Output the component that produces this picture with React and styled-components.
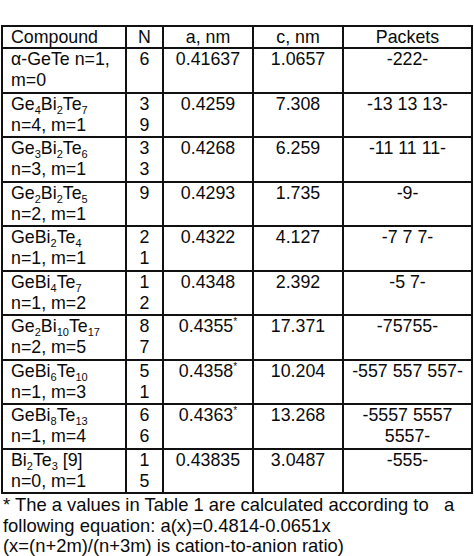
import styled, { createGlobalStyle } from 'styled-components'

const Global = createGlobalStyle`
  html, body {
    margin: 0;
    padding: 0;
    background: #fff;
  }
  body {
    font-family: "Liberation Sans", Arial, sans-serif;
    color: #0a0a0a;
  }
`

const Page = styled.div`
  width: 474px;
  height: 556px;
  overflow: hidden;
  padding-top: 25px;
  box-sizing: border-box;
`

const Table = styled.table`
  margin-left: 1px;
  width: 472px;
  border-collapse: collapse;
  table-layout: fixed;
  font-size: 17.8px;
`

const HeadCell = styled.th`
  border: 2px solid #111;
  height: 20px;
  padding: 0 ${({ $left }) => ($left ? '8px' : '2px')};
  line-height: 20px;
  font-weight: normal;
  text-align: ${({ $left }) => ($left ? 'left' : 'center')};
  white-space: nowrap;
`

const Cell = styled.td`
  border: 2px solid #111;
  height: 42.5px;
  padding: 0 ${({ $left }) => ($left ? '8px' : '4px')};
  line-height: 21.25px;
  vertical-align: top;
  text-align: ${({ $left }) => ($left ? 'left' : 'center')};
`

const Line = styled.div`
  white-space: nowrap;
`

const Sub = styled.span`
  font-size: 11px;
  vertical-align: -4px;
  line-height: 0;
`

const Star = styled.span`
  font-size: 10px;
  vertical-align: 7px;
  line-height: 0;
`

const Note = styled.p`
  margin: 0;
  padding: 1px 0 0 3px;
  font-size: 18.4px;
  line-height: 20.6px;
  white-space: pre;
`

const rows = [
  { formula: 'α-GeTe n=1,', params: 'm=0', n: ['6'], a: '0.41637', c: '1.0657', p: '-222-' },
  { formula: 'Ge_4Bi_2Te_7', params: 'n=4, m=1', n: ['3', '9'], a: '0.4259', c: '7.308', p: '-13 13 13-' },
  { formula: 'Ge_3Bi_2Te_6', params: 'n=3, m=1', n: ['3', '3'], a: '0.4268', c: '6.259', p: '-11 11 11-' },
  { formula: 'Ge_2Bi_2Te_5', params: 'n=2, m=1', n: ['9'], a: '0.4293', c: '1.735', p: '-9-' },
  { formula: 'GeBi_2Te_4', params: 'n=1, m=1', n: ['2', '1'], a: '0.4322', c: '4.127', p: '-7 7 7-' },
  { formula: 'GeBi_4Te_7', params: 'n=1, m=2', n: ['1', '2'], a: '0.4348', c: '2.392', p: '-5 7-' },
  { formula: 'Ge_2Bi_10Te_17', params: 'n=2, m=5', n: ['8', '7'], a: '0.4355', star: true, c: '17.371', p: '-75755-' },
  { formula: 'GeBi_6Te_10', params: 'n=1, m=3', n: ['5', '1'], a: '0.4358', star: true, c: '10.204', p: '-557 557 557-' },
  { formula: 'GeBi_8Te_13', params: 'n=1, m=4', n: ['6', '6'], a: '0.4363', star: true, c: '13.268', p: '-5557 5557 5557-' },
  { formula: 'Bi_2Te_3 [9]', params: 'n=0, m=1', n: ['1', '5'], a: '0.43835', c: '3.0487', p: '-555-' },
]

// "Ge_4Bi_2Te_7" -> Ge<sub>4</sub>Bi<sub>2</sub>Te<sub>7</sub>
const Formula = ({ text }) => {
  const parts = text.split(/_(\d+)/)
  return parts.map((part, i) => (i % 2 ? <Sub key={i}>{part}</Sub> : part))
}

export default function App() {
  return (
    <Page>
      <Global />
      <Table>
        <colgroup>
          <col style={{ width: 124 }} />
          <col style={{ width: 37 }} />
          <col style={{ width: 90 }} />
          <col style={{ width: 90 }} />
          <col />
        </colgroup>
        <thead>
          <tr>
            <HeadCell $left>Compound</HeadCell>
            <HeadCell>N</HeadCell>
            <HeadCell>a, nm</HeadCell>
            <HeadCell>c, nm</HeadCell>
            <HeadCell>Packets</HeadCell>
          </tr>
        </thead>
        <tbody>
          {rows.map((row) => (
            <tr key={row.formula}>
              <Cell $left>
                <Line><Formula text={row.formula} /></Line>
                <Line>{row.params}</Line>
              </Cell>
              <Cell>
                {row.n.map((d, i) => <Line key={i}>{d}</Line>)}
              </Cell>
              <Cell>
                {row.a}
                {row.star && <Star>*</Star>}
              </Cell>
              <Cell>{row.c}</Cell>
              <Cell>{row.p}</Cell>
            </tr>
          ))}
        </tbody>
      </Table>
      <Note>{'* The a values in Table 1 are calculated according to   a\nfollowing equation: a(x)=0.4814-0.0651x\n(x=(n+2m)/(n+3m) is cation-to-anion ratio)'}</Note>
    </Page>
  )
}
